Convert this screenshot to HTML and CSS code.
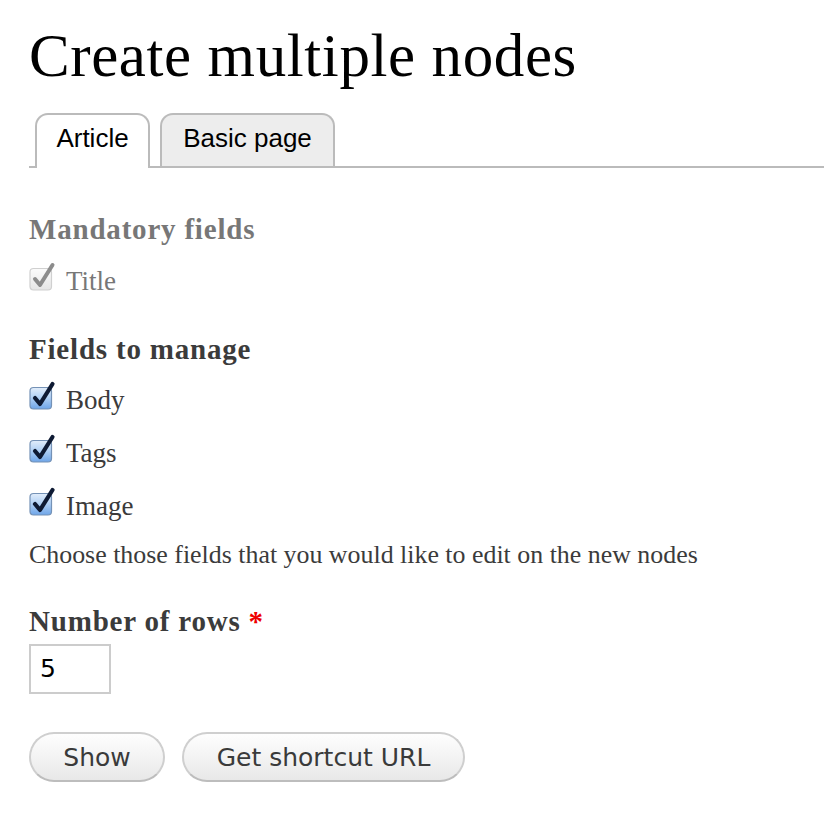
FILE: index.html
```html
<!DOCTYPE html>
<html>
<head>
<meta charset="utf-8">
<link rel="stylesheet" href="styles.css">
</head>
<body>
<div class="page">
  <h1 class="title">Create multiple nodes</h1>
  <ul class="tabs">
    <li class="tab active">Article</li>
    <li class="tab">Basic page</li>
  </ul>

  <div class="group">
    <div class="group-label muted">Mandatory fields</div>
    <div class="check-row disabled">
      <svg class="cb" width="28" height="30" viewBox="0 0 28 30">
        <defs>
          <linearGradient id="gd" x1="0" y1="0" x2="0" y2="1">
            <stop offset="0" stop-color="#fbfbfb"/>
            <stop offset="1" stop-color="#e6e6e6"/>
          </linearGradient>
        </defs>
        <rect x="1" y="6.5" width="21.5" height="21.5" rx="3.5" fill="url(#gd)" stroke="#d0d0d0" stroke-width="1.2"/>
        <path d="M6 17 L11 23 L23.5 3" fill="none" stroke="#8c8c8c" stroke-width="4" stroke-linecap="round" stroke-linejoin="round"/>
      </svg>
      <span class="check-text">Title</span>
    </div>
  </div>

  <div class="group second">
    <div class="group-label">Fields to manage</div>
    <div class="check-row">
      <svg class="cb" width="28" height="30" viewBox="0 0 28 30">
        <defs>
          <linearGradient id="gb" x1="0" y1="0" x2="0" y2="1">
            <stop offset="0" stop-color="#e2edfa"/>
            <stop offset="0.45" stop-color="#b3d2f5"/>
            <stop offset="1" stop-color="#6ea5e8"/>
          </linearGradient>
        </defs>
        <rect x="1" y="6.5" width="21.5" height="21.5" rx="3.5" fill="url(#gb)" stroke="#7592b6" stroke-width="1.2"/>
        <path d="M6 17 L11 23 L23.5 3" fill="none" stroke="#0e1a33" stroke-width="4.2" stroke-linecap="round" stroke-linejoin="round"/>
      </svg>
      <span class="check-text">Body</span>
    </div>
    <div class="check-row">
      <svg class="cb" width="28" height="30" viewBox="0 0 28 30">
        <rect x="1" y="6.5" width="21.5" height="21.5" rx="3.5" fill="url(#gb)" stroke="#7592b6" stroke-width="1.2"/>
        <path d="M6 17 L11 23 L23.5 3" fill="none" stroke="#0e1a33" stroke-width="4.2" stroke-linecap="round" stroke-linejoin="round"/>
      </svg>
      <span class="check-text">Tags</span>
    </div>
    <div class="check-row">
      <svg class="cb" width="28" height="30" viewBox="0 0 28 30">
        <rect x="1" y="6.5" width="21.5" height="21.5" rx="3.5" fill="url(#gb)" stroke="#7592b6" stroke-width="1.2"/>
        <path d="M6 17 L11 23 L23.5 3" fill="none" stroke="#0e1a33" stroke-width="4.2" stroke-linecap="round" stroke-linejoin="round"/>
      </svg>
      <span class="check-text">Image</span>
    </div>
    <div class="description">Choose those fields that you would like to edit on the new nodes</div>
  </div>

  <div class="field">
    <div class="group-label">Number of rows <span class="required">*</span></div>
    <div class="input">5</div>
  </div>

  <div class="actions">
    <button class="btn btn-show">Show</button>
    <button class="btn btn-url">Get shortcut URL</button>
  </div>
</div>
</body>
</html>
```

FILE: styles.css
```css
html, body {
  margin: 0;
  padding: 0;
  background: #ffffff;
}

.page {
  padding: 0 0 0 29px;
  font-family: "Liberation Serif", "DejaVu Serif", serif;
  color: #3b3b3b;
}

.title {
  margin: 26px 0 0 0;
  font-family: "Liberation Serif", serif;
  font-weight: normal;
  font-size: 61px;
  line-height: 60px;
  color: #000;
  letter-spacing: 0.6px;
}

.tabs {
  list-style: none;
  margin: 27px 0 0 0;
  padding: 0 0 0 6px;
  display: flex;
  gap: 10px;
  border-bottom: 2px solid #bbbbbb;
  height: 53px;
}

.tab {
  box-sizing: border-box;
  height: 53px;
  border: 2px solid #bbbbbb;
  border-bottom: none;
  border-radius: 13px 13px 0 0;
  background: #ededed;
  font-family: "Liberation Sans", Arial, sans-serif;
  font-size: 26px;
  line-height: 47px;
  color: #000;
  padding: 0;
  text-align: center;
  width: 175px;
}

.tab.active {
  background: #ffffff;
  height: 55px;
  margin-bottom: -2px;
  width: 115px;
}

.group {
  margin-top: 45px;
}

.group.second {
  margin-top: 36px;
}

.group-label {
  font-weight: bold;
  font-size: 29px;
  line-height: 32px;
  color: #3b3b3b;
  letter-spacing: 0.8px;
}

.group-label.muted {
  color: #777777;
}

.check-row {
  display: flex;
  align-items: flex-start;
  gap: 9px;
  margin-top: 20px;
  height: 32px;
}

.group.second .check-row {
  margin-top: 19px;
}

.group.second .check-row + .check-row {
  margin-top: 21px;
}

.cb {
  display: block;
  flex: none;
  margin-top: -3px;
}

.check-text {
  font-size: 27px;
  line-height: 32px;
  color: #3b3b3b;
}

.disabled .check-text {
  color: #777777;
}

.description {
  margin-top: 18px;
  font-size: 25.9px;
  line-height: 30px;
  color: #3b3b3b;
}

.field {
  margin-top: 35px;
}

.required {
  color: #ee0000;
}

.input {
  box-sizing: border-box;
  margin-top: 7px;
  width: 82px;
  height: 50px;
  border: 2px solid #cccccc;
  padding: 0 0 0 9px;
  font-family: "DejaVu Sans", sans-serif;
  font-size: 25px;
  line-height: 46px;
  color: #000;
}

.actions {
  margin-top: 38px;
  display: flex;
  gap: 17px;
}

.btn {
  box-sizing: border-box;
  height: 50px;
  border: 2px solid #cfcfcf;
  border-bottom-color: #bdbdbd;
  border-radius: 25px;
  background: linear-gradient(#fefefe, #e8e8e8);
  font-family: "DejaVu Sans", sans-serif;
  font-size: 25px;
  color: #3a3a3a;
  padding: 0;
  margin: 0;
}

.btn-show {
  width: 136px;
}

.btn-url {
  width: 283px;
}
```
